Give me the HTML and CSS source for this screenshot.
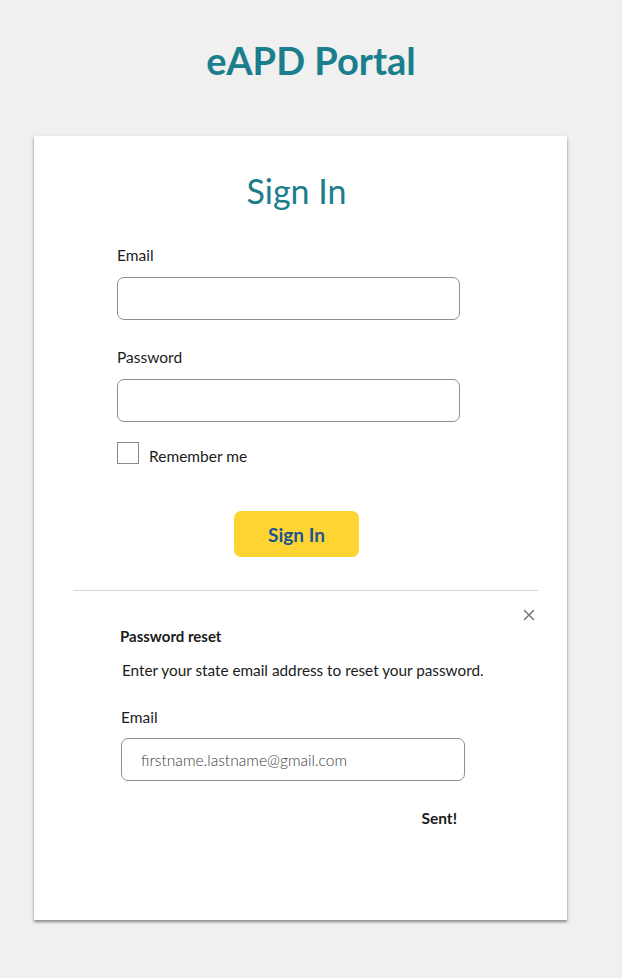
FILE: index.html
```html
<!DOCTYPE html>
<html lang="en">
<head>
<meta charset="utf-8">
<title>eAPD Portal</title>
<link rel="stylesheet" href="styles.css">
</head>
<body>
<h1 class="site-title">eAPD Portal</h1>
<main class="card">
  <h2 class="card-title">Sign In</h2>
  <form class="login-form">
    <label class="field-label" for="email">Email</label>
    <input class="text-input" id="email" type="text">
    <label class="field-label field-label--spaced" for="password">Password</label>
    <input class="text-input" id="password" type="password">
    <label class="remember">
      <span class="checkbox"></span>
      <span class="remember-text">Remember me</span>
    </label>
  </form>
  <div class="button-row">
    <button class="primary-button" type="button">Sign In</button>
  </div>
  <section class="reset-panel">
    <div class="close-row">
      <button class="close-button" type="button" aria-label="Close">
        <svg width="12" height="12" viewBox="0 0 12 12"><path d="M1 1L11 11M11 1L1 11" stroke="#7a7a7a" stroke-width="1.6" fill="none"/></svg>
      </button>
    </div>
    <div class="reset-body">
      <h3 class="reset-title">Password reset</h3>
      <p class="reset-text">Enter your state email address to reset your password.</p>
      <label class="field-label reset-label" for="reset-email">Email</label>
      <input class="text-input reset-input" id="reset-email" type="text" value="firstname.lastname@gmail.com">
      <div class="sent-row"><span class="sent">Sent!</span></div>
    </div>
  </section>
</main>
</body>
</html>
```

FILE: styles.css
```css
* { box-sizing: border-box; }
html, body { margin: 0; padding: 0; }
body {
  background: #f0f0f0;
  font-family: Lato, "Noto Sans", sans-serif;
  color: #1b1b1b;
  width: 622px;
  height: 978px;
  overflow: hidden;
}
.site-title {
  margin: 0;
  padding-top: 37px;
  height: 136px;
  text-align: center;
  font-size: 38px;
  line-height: 46px;
  font-weight: 700;
  color: #1a7e8c;
}
.card {
  margin-left: 34px;
  width: 533px;
  height: 784px;
  background: #fff;
  box-shadow: 0 2px 3px rgba(0,0,0,0.45);
  padding-top: 33px;
}
.card-title {
  margin: 0;
  text-align: center;
  font-size: 34px;
  line-height: 44px;
  font-weight: 400;
  color: #1a7e8c;
  padding-right: 8px;
}
.login-form {
  margin: 32px 0 0 83px;
  width: 343px;
  display: flex;
  flex-direction: column;
}
.field-label {
  display: block;
  font-size: 15.5px;
  line-height: 20px;
  margin-bottom: 12px;
}
.field-label--spaced { margin-top: 27px; }
.text-input {
  display: block;
  width: 343px;
  height: 43px;
  border: 1px solid #8f8f8f;
  border-radius: 7px;
  background: #fff;
  font-family: inherit;
  font-size: 15px;
  padding: 0 19px;
  margin: 0;
}
.remember {
  display: flex;
  align-items: center;
  margin-top: 20px;
  height: 22px;
}
.checkbox {
  width: 22px;
  height: 22px;
  border: 1px solid #8a8a8a;
  background: #fff;
}
.remember-text {
  margin-left: 10px;
  margin-top: 6px;
  font-size: 15.5px;
}
.button-row {
  display: flex;
  justify-content: center;
  margin-top: 47px;
  padding-right: 8px;
}
.primary-button {
  width: 125px;
  height: 46px;
  background: #fdd432;
  border: none;
  border-radius: 7px;
  font-family: inherit;
  font-size: 19px;
  font-weight: 700;
  color: #205493;
  cursor: pointer;
}
.reset-panel {
  margin: 33px 29px 0 39px;
  border-top: 1px solid #d6d6d6;
}
.close-row {
  display: flex;
  justify-content: flex-end;
  padding-right: 3px;
  margin-top: 18px;
}
.close-button {
  width: 12px;
  height: 12px;
  padding: 0;
  border: none;
  background: none;
  display: block;
}
.close-button svg { display: block; }
.reset-body {
  padding-left: 47px;
}
.reset-title {
  margin: 8px 0 0 0;
  font-size: 15px;
  line-height: 14px;
  font-weight: 700;
}
.reset-text {
  margin: 17px 0 0 2px;
  font-size: 15.3px;
  line-height: 20px;
}
.reset-label {
  margin: 27px 0 11px 1px;
}
.reset-input {
  margin-left: 1px;
  width: 344px;
  font-size: 15.6px;
  color: #3c3c3c;
  font-weight: 300;
}
.sent-row {
  display: flex;
  justify-content: flex-end;
  width: 345px;
  margin-top: 27px;
  padding-right: 8px;
}
.sent {
  font-size: 15.5px;
  line-height: 20px;
  font-weight: 700;
}
```
